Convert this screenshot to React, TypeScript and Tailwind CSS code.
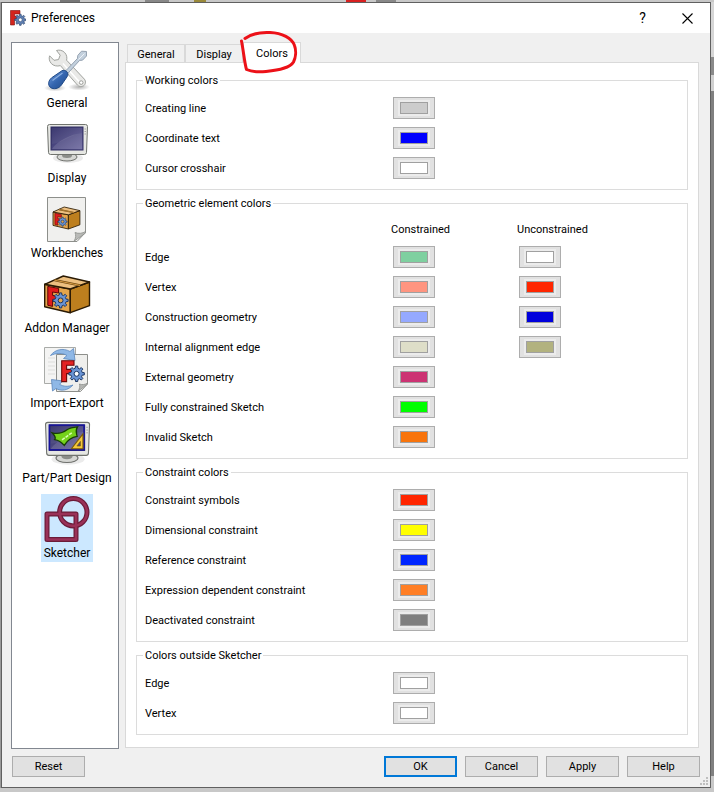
import React, { useState } from 'react';
import clsx from 'clsx';

interface SwatchRow {
  id: string;
  label: string;
  color: string;
  unconstrained?: string;
}

const workingColors: SwatchRow[] = [
  { id: 'creating-line', label: 'Creating line', color: '#cccccc' },
  { id: 'coordinate-text', label: 'Coordinate text', color: '#0000ff' },
  { id: 'cursor-crosshair', label: 'Cursor crosshair', color: '#ffffff' },
];

const geometricColors: SwatchRow[] = [
  { id: 'geo-edge', label: 'Edge', color: '#7fd0a0', unconstrained: '#ffffff' },
  { id: 'geo-vertex', label: 'Vertex', color: '#ff9580', unconstrained: '#ff2600' },
  { id: 'construction', label: 'Construction geometry', color: '#95a9ff', unconstrained: '#0000dc' },
  { id: 'internal', label: 'Internal alignment edge', color: '#dedec8', unconstrained: '#b2b27f' },
  { id: 'external', label: 'External geometry', color: '#cc3373' },
  { id: 'fully', label: 'Fully constrained Sketch', color: '#00ff00' },
  { id: 'invalid', label: 'Invalid Sketch', color: '#f8740c' },
];

const constraintColors: SwatchRow[] = [
  { id: 'symbols', label: 'Constraint symbols', color: '#ff2600' },
  { id: 'dimensional', label: 'Dimensional constraint', color: '#ffff00' },
  { id: 'reference', label: 'Reference constraint', color: '#0026ff' },
  { id: 'expression', label: 'Expression dependent constraint', color: '#ff7f26' },
  { id: 'deactivated', label: 'Deactivated constraint', color: '#7f7f7f' },
];

const outsideColors: SwatchRow[] = [
  { id: 'out-edge', label: 'Edge', color: '#ffffff' },
  { id: 'out-vertex', label: 'Vertex', color: '#ffffff' },
];

const gearPoints = (cx: number, cy: number, r: number) => {
  const points: string[] = [];
  const teeth = 8;
  for (let i = 0; i < teeth; i++) {
    [[-0.3, 0.74], [-0.18, 1], [0.18, 1], [0.3, 0.74]].forEach(([offset, k]) => {
      const a = ((i + offset) / teeth) * Math.PI * 2;
      points.push(`${(cx + Math.cos(a) * r * k).toFixed(2)},${(cy + Math.sin(a) * r * k).toFixed(2)}`);
    });
  }
  return points.join(' ');
};

const Gear = ({ cx, cy, r, hole = '#ffffff' }: { cx: number; cy: number; r: number; hole?: string }) => (
  <g stroke="#1d3763" strokeWidth="1">
    <polygon points={gearPoints(cx, cy, r)} fill="#6a94d4" strokeLinejoin="round" />
    <circle cx={cx} cy={cy} r={r * 0.32} fill={hole} />
  </g>
);

const AppLogo = () => (
  <svg width="16" height="16" viewBox="0 0 16 16" aria-hidden="true">
    <path d="M0.5 0.5H10V4H4.5V6H8V9H4.5V15H0.5Z" fill="#d3241d" stroke="#7d100d" strokeWidth="0.6" />
    <polygon points={gearPoints(10.3, 9.8, 5.6)} fill="#5f80b4" stroke="#30486f" strokeWidth="0.7" />
    <circle cx="10.3" cy="9.8" r="1.9" fill="#fff" stroke="#30486f" strokeWidth="0.6" />
  </svg>
);

const ToolsIcon = () => (
  <>
    <defs>
      <linearGradient id="handle" x1="0" y1="0" x2="1" y2="1">
        <stop offset="0" stopColor="#79a6e4" />
        <stop offset="0.5" stopColor="#3566b0" />
        <stop offset="1" stopColor="#204a87" />
      </linearGradient>
      <radialGradient id="floor">
        <stop offset="0" stopColor="#000" stopOpacity="0.3" />
        <stop offset="1" stopColor="#000" stopOpacity="0" />
      </radialGradient>
    </defs>
    <ellipse cx="12" cy="42" rx="11" ry="3.5" fill="url(#floor)" />
    <ellipse cx="36" cy="41" rx="11" ry="3.5" fill="url(#floor)" />
    <path
      d="M13.5 4.5C16 3.6 19.5 4.2 21.7 6.6C23.8 8.9 24.2 11.6 23.6 14.2L41.4 33.2C43.2 35.4 42.6 38.6 40.4 39.9C38.4 41 36 40.8 34.4 39L17.4 19.6C14 20.6 10.4 19.8 8.3 17.5C6.3 15.3 5.7 12.5 6.6 9.8L11 14.3L15.5 13.6L17.2 9.2Z"
      fill="#e9e9e7" stroke="#a0a29e" strokeWidth="1"
    />
    <path d="M20 17.5L36.5 36" stroke="#fff" strokeWidth="1.5" />
    <circle cx="38.2" cy="36.6" r="1.8" fill="#fff" stroke="#8a8c88" strokeWidth="0.8" />
    <path d="M43.5 5.5V10L39.5 14.2L36.6 14.4L24.8 27.4L22.4 25.2L34.4 12.6L34.8 9.4L38.5 5.2Z" fill="#c3d0dd" stroke="#8d9baa" strokeWidth="0.9" />
    <path d="M35.5 13.5L41.5 7.5" stroke="#eef3f8" strokeWidth="1" />
    <path
      d="M19 24.7C20.5 23.9 22.5 24.5 23.8 25.7C25.1 27 25.3 29 24.2 30.6L18.3 39.2C15.8 42.6 10.4 44 7.2 41.2C4.4 38.4 5.6 34.4 8.6 31.8Z"
      fill="url(#handle)" stroke="#204a87" strokeWidth="1"
    />
    <path d="M9.5 34.5L19.5 27" stroke="#a9c8f2" strokeWidth="1.2" opacity="0.7" />
  </>
);

const Monitor = ({ children }: { children?: React.ReactNode }) => (
  <>
    <defs>
      <linearGradient id="screen" x1="0" y1="0" x2="1" y2="1">
        <stop offset="0" stopColor="#2f2c66" />
        <stop offset="1" stopColor="#6b679e" />
      </linearGradient>
    </defs>
    <ellipse cx="25" cy="37" rx="15" ry="5" fill="#000" opacity="0.08" />
    <ellipse cx="24" cy="36" rx="10" ry="4" fill="#d5d6d3" stroke="#6e706c" />
    <ellipse cx="24" cy="34.5" rx="5" ry="2.5" fill="#8b8d89" />
    <path d="M6.5 3.5H42.5Q44.5 3.5 44.5 5.5L43.5 31.5Q43.3 33.5 41.5 33.5H7.5Q5.7 33.5 5.5 31.5L4.5 5.5Q4.5 3.5 6.5 3.5Z" fill="#e6e7e3" stroke="#70736e" />
    <rect x="8" y="6" width="32" height="23" fill="url(#screen)" stroke="#302e62" />
    <path d="M9 28V23C20 22 28 13 39 12V7H9Z" fill="#fff" opacity="0.06" />
    <path d="M9 28C14 20 28 13 39 12V28Z" fill="#fff" opacity="0.12" />
    <path d="M41.5 8H43M41.5 10.5H43M41.5 13H43" stroke="#999" strokeWidth="0.8" />
    {children}
  </>
);

const PartDesignIcon = () => (
  <g transform="translate(-2.4 -2.5) scale(1.1)">
    <Monitor>
      <rect x="8" y="6" width="31.5" height="22.5" fill="none" stroke="#16129c" strokeWidth="1.4" />
      <path d="M10.5 13C15 14.2 20 13.2 24 10.2C26.5 8.6 29.5 8 33.5 7.6C31.2 11.2 32.8 13.6 33.2 16.2C28.5 16.8 24.5 19.4 21.5 24.5C19 21.5 15.6 19.6 12.8 19.2C14.4 17.2 12.4 15 10.5 13Z" fill="#74d11a" stroke="#173d05" strokeWidth="1.2" />
      <path d="M19.5 19.5L29 12.5" stroke="#d9ffb0" strokeWidth="1.4" strokeDasharray="3 1" />
      <path d="M28 27.5L38.5 14V27.5Z" fill="#f5c93c" stroke="#7d5b05" strokeWidth="1" />
      <path d="M33 25L36.2 20.8V25Z" fill="#4b477c" stroke="#7d5b05" strokeWidth="0.6" />
    </Monitor>
  </g>
);

const Carton = () => (
  <g strokeLinejoin="round">
    <path d="M1.7 13.3L27.3 18V41.7L1.7 35.7Z" fill="#e3a54c" stroke="#2a1a04" strokeWidth="1.4" />
    <path d="M27.3 18L46.5 11V34.7L27.3 41.7Z" fill="#bd7f1e" stroke="#2a1a04" strokeWidth="1.4" />
    <path d="M1.7 13.3L20.3 5L46.5 11L27.3 18Z" fill="#edc080" stroke="#2a1a04" strokeWidth="1.4" />
    <path d="M11.5 9.2L37 14.4" stroke="#6b4710" strokeWidth="2.2" />
    <path d="M11.5 9.2L37 14.4" stroke="#d99c45" strokeWidth="1" />
    <path d="M4.8 15.4L15.6 17.4V22L9.6 21V24.4L13.4 25.2V29.4L9.6 28.8V35.4L4.8 34.3Z" fill="#e01b1b" stroke="#5e0606" />
    <Gear cx={17.6} cy={29.4} r={7.6} hole="#e3a54c" />
  </g>
);

const WorkbenchesIcon = () => (
  <>
    <path d="M4.5 1.5H42.5V36.5L34 45.5H4.5Z" fill="#f0f0ee" stroke="#8d8f8b" />
    <path d="M31 45.3C33 42 33 39 32 36.5C35.5 37.8 39.5 37.6 42.5 35.5L42.5 37Z" fill="#b9bab7" stroke="#8d8f8b" strokeWidth="0.8" />
    <g transform="translate(9 8) scale(0.6)">
      <Carton />
    </g>
  </>
);

const ImportExportIcon = () => (
  <>
    <path d="M1.5 1.5H32.5V37.5H1.5Z" fill="#f4f4f3" stroke="#a9aba8" />
    <path d="M5 12H12M5 16H12M5 20H12M5 24H12M5 28H12" stroke="#dcdddb" />
    <path d="M13.5 8.5H44.5V38L37.5 45.5H13.5Z" fill="#efefed" stroke="#8d8f8b" />
    <path d="M35 45.3C37 42.5 37 40 36.4 38C39 39 42 38.8 44.5 37V38Z" fill="#b5b6b3" stroke="#8d8f8b" strokeWidth="0.8" />
    <path d="M7.5 9.5C12 3.5 20 1.5 27 5.5L30.5 2.5L32 14.5L20.5 12.5L24 9.5C19 6.5 13 7 7.5 9.5Z" fill="#8fb8e6" stroke="#5a86bd" strokeWidth="0.8" />
    <path d="M30 39C25 44.5 18 45.5 13 42.5L9.5 45L8.5 33.5L20 35L16.5 38.2C20.5 40.8 25 40.8 30 39Z" fill="#8fb8e6" stroke="#5a86bd" strokeWidth="0.8" />
    <path d="M18.7 14.7H31V19.2H23.6V23.4H28.5V27.6H23.6V35.6H18.7Z" fill="#e52222" stroke="#6d0909" strokeWidth="1.1" />
    <Gear cx={33.6} cy={27.8} r={7.8} />
  </>
);

const SketcherIcon = () => (
  <g fill="none">
    <g stroke="#6b1c39" strokeWidth="5">
      <rect x="4" y="18" width="29" height="25.5" strokeLinejoin="round" />
      <circle cx="30.3" cy="16.2" r="13.7" />
    </g>
    <g stroke="#9a3158" strokeWidth="2.6">
      <rect x="4" y="18" width="29" height="25.5" strokeLinejoin="round" />
      <circle cx="30.3" cy="16.2" r="13.7" />
    </g>
  </g>
);

const pages = [
  { name: 'General', icon: <ToolsIcon /> },
  { name: 'Display', icon: <Monitor /> },
  { name: 'Workbenches', icon: <WorkbenchesIcon /> },
  { name: 'Addon Manager', icon: <Carton /> },
  { name: 'Import-Export', icon: <ImportExportIcon /> },
  { name: 'Part/Part Design', icon: <PartDesignIcon /> },
  { name: 'Sketcher', icon: <SketcherIcon /> },
];

const ColorButton = ({ id, color, label }: { id: string; color: string; label?: string }) => (
  <button
    id={id}
    type="button"
    aria-label={label}
    className="flex h-[22px] w-[42px] items-center justify-center border border-[#adadad] bg-[#e1e1e1]"
  >
    <span className="border-2 border-[#ececec]">
      <span className="block h-3 w-7 border border-[#a0a0a0]" style={{ backgroundColor: color }} />
    </span>
  </button>
);

const ColorGroup = ({ title, rows, header }: { title: string; rows: SwatchRow[]; header?: boolean }) => (
  <fieldset className="min-w-0 border border-[#dcdcdc] px-2 py-[6px]">
    <legend className="-ml-0.5 px-0.5 pt-0.5 leading-3">{title}</legend>
    {header && (
      <div className="grid h-[26px] grid-cols-[246px_126px_1fr] items-center pt-0.5">
        <span />
        <span>Constrained</span>
        <span>Unconstrained</span>
      </div>
    )}
    {rows.map((row) => (
      <div key={row.id} className="grid h-[30px] grid-cols-[248px_126px_1fr] items-center">
        <label htmlFor={row.id} className="pt-0.5">{row.label}</label>
        <ColorButton id={row.id} color={row.color} />
        {row.unconstrained && (
          <ColorButton id={`${row.id}-free`} color={row.unconstrained} label={`${row.label}, unconstrained`} />
        )}
      </div>
    ))}
  </fieldset>
);

const DialogButton = ({ children, primary }: { children: string; primary?: boolean }) => (
  <button
    type="button"
    className={clsx(
      'h-[21px] w-[73px] bg-[#e1e1e1] leading-none',
      primary ? 'border-2 border-[#0078d7]' : 'border border-[#adadad]'
    )}
  >
    {children}
  </button>
);

const App: React.FC = () => {
  const [page, setPage] = useState('Sketcher');
  const [tab, setTab] = useState('Colors');

  return (
    <div className="flex min-h-screen flex-col bg-[#c8c8c8] font-['Roboto',sans-serif] text-[11px] text-black">
      {/* Main window toolbar behind the dialog */}
      <div className="flex h-[2px]">
        <div className="w-[60px]" />
        <div className="w-5 bg-[#777]" />
        <div className="w-[65px]" />
        <div className="w-6 bg-[#888]" />
        <div className="w-[25px]" />
        <div className="w-3 bg-[#9a8a3a]" />
        <div className="w-[140px]" />
        <div className="w-5 bg-[#d82020]" />
        <div className="w-[10px]" />
        <div className="w-5 bg-[#888]" />
      </div>

      <div className="flex flex-1">
        <div className="w-px bg-[#9a9a9a]" />

        <div className="flex flex-1 flex-col border border-[#606060] bg-[#f0f0f0]">
          {/* Title bar */}
          <header className="flex h-[30px] items-center bg-white pl-2">
            <AppLogo />
            <h1 className="ml-[5px] flex-1 text-xs">Preferences</h1>
            <button type="button" aria-label="Help" className="w-[45px] text-sm">?</button>
            <button type="button" aria-label="Close" className="flex h-full w-[45px] items-center justify-center">
              <svg width="11" height="11" viewBox="0 0 11 11" stroke="#000" strokeWidth="1.1">
                <path d="M0.5 0.5L10.5 10.5M10.5 0.5L0.5 10.5" />
              </svg>
            </button>
          </header>

          <div className="flex flex-1 gap-[6px] pt-[9px] pr-[11px] pl-[9px]">
            {/* Page list */}
            <nav className="flex w-[108px] flex-col items-center gap-[7px] border border-[#828790] bg-white pt-px pl-1 text-xs">
              {pages.map((p) => (
                <button
                  key={p.name}
                  type="button"
                  onClick={() => setPage(p.name)}
                  className={clsx(
                    'flex h-[68px] flex-col items-center px-0.5 pt-0.5 whitespace-nowrap',
                    page === p.name && 'bg-[#cce8ff]'
                  )}
                >
                  <svg width="48" height="48" viewBox="0 0 48 48" aria-hidden="true">{p.icon}</svg>
                  <span className="leading-[18px]">{p.name}</span>
                </button>
              ))}
            </nav>

            <div className="flex min-w-0 flex-1 flex-col pb-px">
              <div role="tablist" className="relative flex h-5 items-end pl-0.5">
                {['General', 'Display', 'Colors'].map((name) => (
                  <button
                    key={name}
                    type="button"
                    role="tab"
                    aria-selected={tab === name}
                    onClick={() => setTab(name)}
                    className={clsx(
                      'w-[58px] border border-b-0 border-[#d9d9d9] leading-none',
                      tab === name ? 'z-10 -mb-px h-[21px] bg-white' : 'h-[18px] bg-[#f0f0f0] pt-0.5'
                    )}
                  >
                    {name}
                  </button>
                ))}
                {/* Marker circle round the active tab */}
                <svg
                  className="pointer-events-none absolute -top-3 left-[114px] z-20"
                  width="62" height="46" viewBox="0 0 62 46" fill="none" stroke="#ec1118" strokeWidth="3" strokeLinecap="round" strokeLinejoin="round"
                >
                  <path d="M6 8.5C13 3.5 22 2 31 2.5C43 3 53 8 55.5 15.5C57.5 21 56.5 28 54.5 32C51 38 41 40 27 41.5C20 42.2 12 41.5 7.5 39.5C5.5 33 4.5 21 2.5 11" />
                </svg>
              </div>

              <div className="flex flex-1 flex-col gap-[6px] border border-[#d9d9d9] bg-white px-[10px] pt-[10px] pb-3">
                <ColorGroup title="Working colors" rows={workingColors} />
                <ColorGroup title="Geometric element colors" rows={geometricColors} header />
                <ColorGroup title="Constraint colors" rows={constraintColors} />
                <ColorGroup title="Colors outside Sketcher" rows={outsideColors} />
              </div>
            </div>
          </div>

          {/* Footer */}
          <footer className="relative flex gap-2 pt-[7px] pr-[10px] pb-[10px] pl-[10px]">
            <DialogButton>Reset</DialogButton>
            <div className="flex-1" />
            <DialogButton primary>OK</DialogButton>
            <DialogButton>Cancel</DialogButton>
            <DialogButton>Apply</DialogButton>
            <DialogButton>Help</DialogButton>
            <svg className="absolute right-0.5 bottom-0.5" width="8" height="8" viewBox="0 0 8 8" fill="#bfbfbf" aria-hidden="true">
              <path d="M6 0h2v2H6zM3 3h2v2H3zM6 3h2v2H6zM0 6h2v2H0zM3 6h2v2H3zM6 6h2v2H6z" />
            </svg>
          </footer>
        </div>

        {/* Main window edge */}
        <div className="flex w-[3px] flex-col bg-[#808080]">
          <div className="h-[55px] bg-[#d6d6d6]" />
          <div className="h-[18px] bg-[#8a8a8a]" />
          <div className="h-4 bg-[#d0d0d0]" />
          <div className="flex-1" />
          <div className="h-3 bg-[#c8c8c8]" />
        </div>
      </div>
      <div className="h-1" />
    </div>
  );
};

export default App;
